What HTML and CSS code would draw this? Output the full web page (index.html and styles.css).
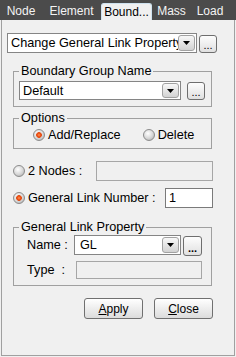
FILE: index.html
```html
<!DOCTYPE html>
<html lang="en">
<head>
    <meta charset="UTF-8">
    <title>Boundary - General Link Property</title>
    <link rel="stylesheet" href="styles.css">
</head>
<body>

<div class="tabs">
    <span class="tab tab-node">Node</span>
    <span class="tab tab-element">Element</span>
    <span class="tab tab-bound active">Bound...</span>
    <span class="tab tab-mass">Mass</span>
    <span class="tab tab-load">Load</span>
</div>

<div class="panel">
    <div class="row">
        <div class="combo combo-command">
            <span class="combo-text">Change General Link Property</span>
            <span class="combo-btn"><svg width="7" height="4" viewBox="0 0 7 4"><path d="M0 0h7L3.5 4z"/></svg></span>
        </div>
        <button class="more more-command">...</button>
    </div>

    <fieldset class="group group-boundary">
        <legend>Boundary Group Name</legend>
        <div class="row">
            <div class="combo combo-boundary">
                <span class="combo-text">Default</span>
                <span class="combo-btn"><svg width="7" height="4" viewBox="0 0 7 4"><path d="M0 0h7L3.5 4z"/></svg></span>
            </div>
            <button class="more more-boundary">...</button>
        </div>
    </fieldset>

    <fieldset class="group group-options">
        <legend>Options</legend>
        <div class="radio-row">
            <label class="radio-label"><span class="radio checked"></span>Add/Replace</label>
            <label class="radio-label radio-delete"><span class="radio"></span>Delete</label>
        </div>
    </fieldset>

    <div class="pick-row pick-nodes">
        <label class="radio-label"><span class="radio"></span>2 Nodes :</label>
        <span class="field field-disabled field-nodes"></span>
    </div>

    <div class="pick-row pick-number">
        <label class="radio-label"><span class="radio checked"></span>General Link Number :</label>
        <span class="field field-number">1</span>
    </div>

    <fieldset class="group group-property">
        <legend>General Link Property</legend>
        <div class="row">
            <span class="prop-label">Name :</span>
            <div class="combo combo-name">
                <span class="combo-text">GL</span>
                <span class="combo-btn"><svg width="7" height="4" viewBox="0 0 7 4"><path d="M0 0h7L3.5 4z"/></svg></span>
            </div>
            <button class="more more-name">...</button>
        </div>
        <div class="row row-type">
            <span class="prop-label prop-type">Type&nbsp; :</span>
            <span class="field field-disabled field-type"></span>
        </div>
    </fieldset>

    <div class="actions">
        <button class="btn"><u>A</u>pply</button>
        <button class="btn"><u>C</u>lose</button>
    </div>
</div>

</body>
</html>
```

FILE: styles.css
```css
body {
    margin: 0;
    width: 236px;
    height: 357px;
    overflow: hidden;
    background-color: #f0f0f0;
    font-family: "Liberation Sans", Arial, sans-serif;
    font-size: 12.7px;
    color: #000;
}

/* tab strip */
.tabs {
    height: 20px;
    display: flex;
    align-items: flex-end;
    background-color: #4b4b4b;
}
.tab {
    height: 17px;
    line-height: 17px;
    font-size: 12px;
    color: #f4f4f4;
    text-align: center;
    box-sizing: border-box;
}
.tab-node { width: 42px; }
.tab-element { width: 59px; }
.tab-bound { width: 51px; }
.tab-mass { width: 39px; }
.tab-load { width: 38px; }
.tab.active {
    line-height: 16px;
    color: #000;
    background-color: #f0f0f0;
    border: 1px solid #cfe2ef;
    border-bottom: 0;
    border-radius: 3px 3px 0 0;
}

.panel {
    margin-left: 1px;
    width: 234px;
    height: 336px;
    box-sizing: border-box;
    border: 1px solid #a0a0a0;
    border-top: 0;
    padding: 13px 0 0 5px;
}

.row {
    display: flex;
    align-items: flex-start;
}

/* combo boxes */
.combo {
    display: flex;
    align-items: center;
    box-sizing: border-box;
    background-color: #fff;
    border: 1px solid #858585;
}
.combo-text {
    flex: 1;
    overflow: hidden;
    white-space: nowrap;
    padding-left: 3px;
}
.combo-btn {
    width: 17px;
    height: 16px;
    margin-right: 1px;
    box-sizing: border-box;
    display: flex;
    align-items: center;
    justify-content: center;
    border: 1px solid #a2a2a2;
    border-radius: 3px;
    background: linear-gradient(#f8f8f8, #d2d2d2);
}
.combo-command { width: 190px; height: 20px; }
.combo-boundary { width: 162px; height: 19px; }
.combo-name { width: 107px; height: 20px; }
.combo-name .combo-text { padding-left: 5px; }
.combo-boundary .combo-btn { height: 15px; }

.more {
    box-sizing: border-box;
    padding: 0 0 2px;
    display: flex;
    align-items: flex-end;
    justify-content: center;
    border: 1px solid #6e6e6e;
    border-radius: 3px;
    background: linear-gradient(#fdfdfd, #e0e0e0);
    font-family: "Liberation Sans", Arial, sans-serif;
    font-size: 11px;
    line-height: 10px;
    color: #000;
}
.more-command { width: 18px; height: 18px; margin: 2px 0 0 2px; }
.more-boundary { width: 18px; height: 18px; margin: 1px 0 0 6px; }
.more-name { width: 19px; height: 20px; margin: 1px 0 0 2px; font-weight: bold; }

/* group boxes */
.group {
    margin: 10px 0 0 6px;
    width: 199px;
    box-sizing: border-box;
    border: 1px solid #a0a0a0;
    padding: 2px 5px 6px;
    min-width: 0;
}
.group legend {
    padding: 0 2px;
    line-height: 16px;
}
.group-options { margin-top: 3px; padding: 1px 5px 5px; }
.group-property { margin-top: 11px; padding: 0 5px 6px; }

/* radios */
.radio-row {
    height: 16px;
    display: flex;
    align-items: center;
    padding-left: 14px;
}
.radio-label {
    display: flex;
    align-items: center;
    white-space: nowrap;
}
.radio-delete { margin-left: 22px; }
.radio {
    width: 12px;
    height: 12px;
    margin-right: 3px;
    box-sizing: border-box;
    border: 1px solid #8c8c8c;
    border-radius: 50%;
    background: radial-gradient(circle at 40% 35%, #ffffff 0, #d6d6d6 55%, #a4a4a4 100%);
}
.radio.checked {
    background:
        radial-gradient(circle at 50% 50%, #ff9a5c 0, #f0561a 1.5px, #e04810 2.5px, rgba(224, 72, 16, 0) 3.2px),
        radial-gradient(circle at 40% 35%, #ffffff 0, #d6d6d6 55%, #a4a4a4 100%);
}

.pick-row {
    margin-left: 6px;
    width: 200px;
    height: 20px;
    display: flex;
    align-items: center;
}
.pick-nodes { margin-top: 12px; }
.pick-number { margin-top: 7px; }

/* text fields */
.field {
    box-sizing: border-box;
    height: 20px;
    margin-left: auto;
    border: 1px solid #7a7a7a;
    background-color: #fff;
    line-height: 18px;
    padding-left: 3px;
}
.field-disabled {
    border-color: #a6a6a6;
    background-color: #f0f0f0;
}
.field-nodes { width: 117px; }
.field-number { width: 48px; }

.prop-label {
    width: 55px;
    padding-left: 8px;
    box-sizing: border-box;
    line-height: 20px;
    white-space: nowrap;
}
.prop-type { width: 57px; line-height: 18px; }
.row-type { margin-top: 5px; }
.field-type { width: 126px; height: 18px; margin-left: 0; }

/* buttons */
.actions {
    margin: 12px 0 0 6px;
    width: 200px;
    display: flex;
    justify-content: flex-end;
    gap: 11px;
}
.btn {
    width: 59px;
    height: 21px;
    padding: 0;
    border: 1px solid #707070;
    border-radius: 3px;
    background: linear-gradient(#ffffff, #dcdcdc);
    font-family: "Liberation Sans", Arial, sans-serif;
    font-size: 12px;
    color: #000;
}
```
